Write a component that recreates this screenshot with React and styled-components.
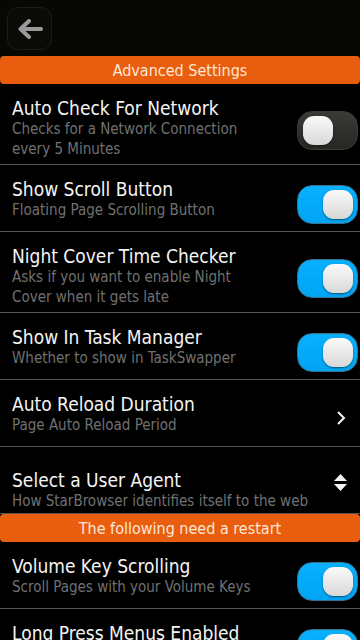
import React from "react";
import styled, { createGlobalStyle } from "styled-components";

const GlobalStyle = createGlobalStyle`
  html, body {
    margin: 0;
    padding: 0;
    background: #000;
  }
  body {
    font-family: "DejaVu Sans Condensed", "Open Sans", sans-serif;
  }
`;

const settings = [
  { title: "Auto Check For Network", sub: ["Checks for a Network Connection", "every 5 Minutes"], kind: "toggle", on: false },
  { title: "Show Scroll Button", sub: ["Floating Page Scrolling Button"], kind: "toggle", on: true },
  { title: "Night Cover Time Checker", sub: ["Asks if you want to enable Night", "Cover when it gets late"], kind: "toggle", on: true },
  { title: "Show In Task Manager", sub: ["Whether to show in TaskSwapper"], kind: "toggle", on: true },
  { title: "Auto Reload Duration", sub: ["Page Auto Reload Period"], kind: "chevron" },
  { title: "Select a User Agent", sub: ["How StarBrowser identifies itself to the web"], kind: "select", low: true },
];

const restart = [
  { title: "Volume Key Scrolling", sub: ["Scroll Pages with your Volume Keys"], kind: "toggle", on: true },
  { title: "Long Press Menus Enabled", sub: ["Long press on links for menus"], kind: "toggle", on: true },
];

const Screen = styled.div`
  width: 360px;
  height: 640px;
  overflow: hidden;
  background: #000;
  color: #f2f2f2;
`;

const TopBar = styled.div`
  height: 56px;
  background: #070703;
  display: flex;
  align-items: flex-start;
  padding: 7px 0 0 7px;
  box-sizing: border-box;
`;

const BackButton = styled.div`
  width: 45px;
  height: 43px;
  border-radius: 11px;
  border: 1px solid #1b1b17;
  background: #0a0a06;
  display: flex;
  align-items: center;
  justify-content: center;
  box-sizing: border-box;
`;

const SectionHeader = styled.div`
  height: 28px;
  background: #e85e0e;
  border-radius: 4px;
  color: #fde6d6;
  font-size: 16px;
  display: flex;
  align-items: center;
  justify-content: center;
`;

const Row = styled.div`
  min-height: 67px;
  box-sizing: border-box;
  padding: ${(p) => (p.$low ? "22px 0 0" : "13px 0 5px")} 12px;
  border-bottom: 1px solid #555;
  display: flex;
  align-items: flex-start;
  justify-content: space-between;
`;

const Texts = styled.div`
  display: flex;
  flex-direction: column;
`;

const Title = styled.div`
  font-size: 19px;
  line-height: 22px;
  color: #f4f4f4;
  white-space: nowrap;
`;

const Sub = styled.div`
  font-size: 15px;
  line-height: 20px;
  color: #707070;
  white-space: nowrap;
`;

const Side = styled.div`
  align-self: center;
  display: flex;
  align-items: center;
  margin-right: ${(p) => p.$mr || 2}px;
  margin-top: ${(p) => p.$mt || 4}px;
`;

const Track = styled.div`
  width: 61px;
  height: 39px;
  border-radius: 15px;
  box-sizing: border-box;
  border: 1px solid ${(p) => (p.$on ? "#3a6f8e" : "#3a3a36")};
  background: ${(p) =>
    p.$on ? "linear-gradient(#08b0ff, #00a4f2)" : "linear-gradient(#3a3a36, #262622)"};
  display: flex;
  align-items: center;
  justify-content: ${(p) => (p.$on ? "flex-end" : "flex-start")};
  padding: 0 4px 0 5px;
`;

const Knob = styled.div`
  width: 30px;
  height: 29px;
  border-radius: 11px;
  background: linear-gradient(#fafafa, #d8d8d8);
  box-shadow: 0 1px 2px rgba(0, 0, 0, 0.5);
`;

const Toggle = ({ on }) => (
  <Track $on={on}>
    <Knob />
  </Track>
);

const Chevron = () => (
  <svg width="10" height="16" viewBox="0 0 10 16">
    <path d="M2 2 L8 8 L2 14" fill="none" stroke="#f4f4f4" strokeWidth="2" />
  </svg>
);

const UpDown = () => (
  <svg width="15" height="19" viewBox="0 0 15 19">
    <path d="M7.5 1 L14 8 L1 8 Z M1 11 L14 11 L7.5 18 Z" fill="#f4f4f4" />
  </svg>
);

const SettingRow = ({ item }) => (
  <Row $low={item.low}>
    <Texts>
      <Title>{item.title}</Title>
      {item.sub.map((s) => (
        <Sub key={s}>{s}</Sub>
      ))}
    </Texts>
    {item.kind === "toggle" && (
      <Side>
        <Toggle on={item.on} />
      </Side>
    )}
    {item.kind === "chevron" && (
      <Side $mr={14} $mt={2}>
        <Chevron />
      </Side>
    )}
    {item.kind === "select" && (
      <Side $mr={12} $mt={-18}>
        <UpDown />
      </Side>
    )}
  </Row>
);

export default function App() {
  return (
    <Screen>
      <GlobalStyle />
      <TopBar>
        <BackButton>
          <svg width="26" height="20" viewBox="0 0 26 20">
            <path
              d="M24 10 H4 M12 2 L3.5 10 L12 18"
              fill="none"
              stroke="#9a9a9a"
              strokeWidth="4"
              strokeLinecap="round"
              strokeLinejoin="round"
            />
          </svg>
        </BackButton>
      </TopBar>
      <SectionHeader>Advanced Settings</SectionHeader>
      {settings.map((s) => (
        <SettingRow key={s.title} item={s} />
      ))}
      <SectionHeader>The following need a restart</SectionHeader>
      {restart.map((s) => (
        <SettingRow key={s.title} item={s} />
      ))}
    </Screen>
  );
}
